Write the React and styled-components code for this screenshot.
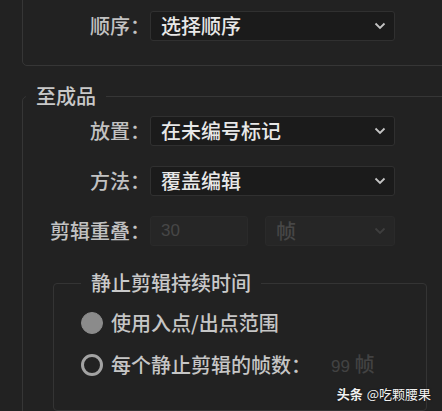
import React from "react";
import styled, { createGlobalStyle } from "styled-components";

const GlobalStyle = createGlobalStyle`
  html, body {
    margin: 0;
    padding: 0;
    background: #222222;
  }
  body {
    font-family: "Noto Sans CJK SC", "Liberation Sans", sans-serif;
    font-weight: 500;
  }
`;

const Page = styled.div`
  width: 442px;
  height: 411px;
  overflow: hidden;
  position: relative;
  background: #222222;
  padding-left: 22px;
  box-sizing: border-box;
`;

const Group = styled.fieldset`
  margin: ${({ $top }) => $top}px -40px 0 0;
  padding: 0 0 ${({ $bottom }) => $bottom}px 3px;
  border: 1px solid #363636;
  border-radius: 5px;
  min-width: 0;
`;

const Legend = styled.legend`
  padding: 0 10px;
  font-size: 20px;
  line-height: 20px;
  color: #c9c9c9;
`;

const Rows = styled.div`
  display: flex;
  flex-direction: column;
  gap: 20px;
  margin-top: ${({ $top }) => $top}px;
`;

const Row = styled.div`
  display: flex;
  align-items: center;
`;

const Label = styled.label`
  width: 124px;
  flex: 0 0 124px;
  text-align: right;
  font-size: 20px;
  line-height: 30px;
  color: #c2c2c2;
  white-space: nowrap;
`;

const Select = styled.div`
  display: flex;
  align-items: center;
  justify-content: space-between;
  box-sizing: border-box;
  width: ${({ $w }) => $w}px;
  height: 30px;
  margin-left: ${({ $gap }) => $gap || 0}px;
  padding: 0 8px 0 10px;
  border-radius: 3px;
  border: 1px solid ${({ $disabled }) => ($disabled ? "#2a2a2a" : "#303030")};
  background: ${({ $disabled }) => ($disabled ? "#262626" : "#1b1b1b")};
  color: ${({ $disabled }) => ($disabled ? "#474747" : "#e8e8e8")};
  font-size: 20px;
  line-height: 20px;
`;

const NumText = styled.span`
  font-family: "Liberation Sans", "Noto Sans CJK SC", sans-serif;
  font-weight: 400;
  font-size: 17px;
`;

const Chevron = ({ color }) => (
  <svg width="12" height="8" viewBox="0 0 12 8">
    <path d="M1.5 1.5 L6 6 L10.5 1.5" fill="none" stroke={color} strokeWidth="1.8" />
  </svg>
);

const Inner = styled.fieldset`
  margin: 27px 0 0 27px;
  width: 374px;
  box-sizing: border-box;
  padding: 0 0 33px 27px;
  border: 1px solid #343434;
  border-radius: 4px;
  min-width: 0;
`;

const Options = styled.div`
  display: flex;
  flex-direction: column;
  gap: 18px;
  margin-top: 18px;
`;

const Option = styled.div`
  display: flex;
  align-items: center;
  height: 24px;
  gap: 8px;
  font-size: 20px;
  line-height: 24px;
  color: #c6c6c6;
  white-space: nowrap;
`;

const Radio = styled.span`
  width: 22px;
  height: 22px;
  flex: 0 0 22px;
  box-sizing: border-box;
  border-radius: 50%;
  background: ${({ $checked }) => ($checked ? "#8b8b8b" : "transparent")};
  border: ${({ $checked }) => ($checked ? "1px solid #8b8b8b" : "3px solid #a3a3a3")};
`;

const Dim = styled.span`
  margin-left: 12px;
  color: #424242;
  font-size: 20px;
`;

const Watermark = styled.div`
  position: absolute;
  right: 11px;
  bottom: 8px;
  font-size: 13px;
  font-weight: 400;
  color: #f2f2f2;
  text-shadow: 0 0 2px rgba(0, 0, 0, 0.6);
  b {
    font-weight: 700;
    margin-right: 4px;
  }
`;

export default function App() {
  return (
    <>
      <GlobalStyle />
      <Page>
        <Group $top={-20} $bottom={24}>
          <Legend>从素材箱</Legend>
          <Rows $top={11}>
            <Row>
              <Label>顺序：</Label>
              <Select $w={245}>
                <span>选择顺序</span>
                <Chevron color="#c4c4c4" />
              </Select>
            </Row>
          </Rows>
        </Group>

        <Group $top={20} $bottom={60}>
          <Legend>至成品</Legend>
          <Rows $top={10}>
            <Row>
              <Label>放置：</Label>
              <Select $w={245}>
                <span>在未编号标记</span>
                <Chevron color="#c4c4c4" />
              </Select>
            </Row>
            <Row>
              <Label>方法：</Label>
              <Select $w={245}>
                <span>覆盖编辑</span>
                <Chevron color="#c4c4c4" />
              </Select>
            </Row>
            <Row>
              <Label>剪辑重叠：</Label>
              <Select $w={98} $disabled>
                <NumText>30</NumText>
              </Select>
              <Select $w={130} $gap={17} $disabled>
                <span>帧</span>
                <Chevron color="#3e3e3e" />
              </Select>
            </Row>
          </Rows>

          <Inner>
            <Legend>静止剪辑持续时间</Legend>
            <Options>
              <Option>
                <Radio $checked />
                <span>使用入点/出点范围</span>
              </Option>
              <Option>
                <Radio />
                <span>每个静止剪辑的帧数：</span>
                <Dim>
                  <NumText>99</NumText> 帧
                </Dim>
              </Option>
            </Options>
          </Inner>
        </Group>

        <Watermark>
          <b>头条</b>@吃颗腰果
        </Watermark>
      </Page>
    </>
  );
}
